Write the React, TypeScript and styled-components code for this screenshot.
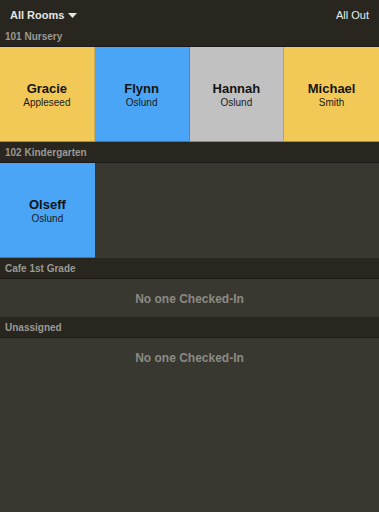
import * as React from "react";
import styled, { createGlobalStyle } from "styled-components";

type Kid = { first: string; last: string; color: string };
type Room = { name: string; kids: Kid[] };

const YELLOW = "#f2c956";
const BLUE = "#4aa5f7";
const GRAY = "#c1c1c1";

const rooms: Room[] = [
    {
        name: "101 Nursery",
        kids: [
            { first: "Gracie", last: "Appleseed", color: YELLOW },
            { first: "Flynn", last: "Oslund", color: BLUE },
            { first: "Hannah", last: "Oslund", color: GRAY },
            { first: "Michael", last: "Smith", color: YELLOW },
        ],
    },
    {
        name: "102 Kindergarten",
        kids: [{ first: "Olseff", last: "Oslund", color: BLUE }],
    },
    { name: "Cafe 1st Grade", kids: [] },
    { name: "Unassigned", kids: [] },
];

const GlobalStyle = createGlobalStyle`
    html, body {
        margin: 0;
        padding: 0;
        background: #393830;
        font-family: "Liberation Sans", Arial, sans-serif;
    }
`;

const App = () => {
    return (
        <>
            <GlobalStyle />
            <S.Page>
                <S.TopBar>
                    <S.RoomPicker>
                        All Rooms
                        <S.Caret width="9" height="5" viewBox="0 0 9 5">
                            <path d="M0 0 L9 0 L4.5 5 Z" fill="#e4e4e4" />
                        </S.Caret>
                    </S.RoomPicker>
                    <S.AllOut>All Out</S.AllOut>
                </S.TopBar>
                {rooms.map((room) => (
                    <S.Section key={room.name}>
                        <S.SectionHeader>{room.name}</S.SectionHeader>
                        {room.kids.length > 0 ? (
                            <S.TileGrid>
                                {room.kids.map((kid) => (
                                    <S.Tile key={kid.first} $color={kid.color}>
                                        <S.FirstName>{kid.first}</S.FirstName>
                                        <S.LastName>{kid.last}</S.LastName>
                                    </S.Tile>
                                ))}
                            </S.TileGrid>
                        ) : (
                            <S.Empty>No one Checked-In</S.Empty>
                        )}
                    </S.Section>
                ))}
            </S.Page>
        </>
    );
};

const S = {
    Page: styled.div`
        width: 379px;
        min-height: 512px;
        background: #393830;
        display: flex;
        flex-direction: column;
    `,
    TopBar: styled.div`
        height: 26px;
        background: #28261f;
        display: flex;
        align-items: center;
        justify-content: space-between;
        padding: 4px 10px 0 10px;
        box-sizing: border-box;
    `,
    RoomPicker: styled.div`
        display: flex;
        align-items: center;
        gap: 4px;
        font-size: 11px;
        font-weight: bold;
        color: #e4e4e4;
    `,
    Caret: styled.svg`
        display: block;
        margin-top: 1px;
    `,
    AllOut: styled.div`
        font-size: 11px;
        color: #ececec;
    `,
    Section: styled.div`
        display: flex;
        flex-direction: column;
    `,
    SectionHeader: styled.div`
        height: 20px;
        background: #28261f;
        color: #9a9993;
        font-size: 10px;
        font-weight: bold;
        padding-left: 5px;
        display: flex;
        align-items: center;
        border-bottom: 1px solid #1c1a1c;
    `,
    TileGrid: styled.div`
        display: grid;
        grid-template-columns: repeat(4, 1fr);
        background: #393830;
    `,
    Tile: styled.div<{ $color: string }>`
        height: 95px;
        background: ${(p) => p.$color};
        display: flex;
        flex-direction: column;
        align-items: center;
        justify-content: center;
        padding-top: 2px;
        box-sizing: border-box;
        border-right: 1px solid rgba(40, 30, 30, 0.18);
        border-bottom: 1px solid rgba(40, 30, 30, 0.35);
        &:last-child {
            border-right: none;
        }
    `,
    FirstName: styled.div`
        font-size: 13px;
        font-weight: bold;
        color: #141414;
        line-height: 14px;
    `,
    LastName: styled.div`
        font-size: 10px;
        color: #1a1a1a;
        line-height: 13px;
    `,
    Empty: styled.div`
        height: 38px;
        display: flex;
        align-items: center;
        justify-content: center;
        color: #8b8a84;
        font-size: 12px;
        font-weight: bold;
        padding-top: 1px;
        box-sizing: border-box;
    `,
};

export default App;
